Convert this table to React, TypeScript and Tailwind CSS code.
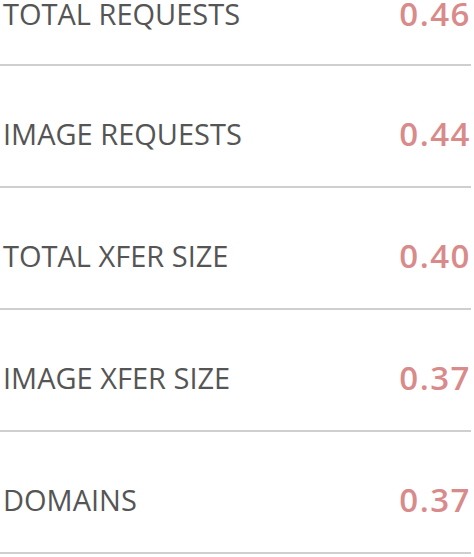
const rows = [
  { label: 'TOTAL REQUESTS', value: '0.46' },
  { label: 'IMAGE REQUESTS', value: '0.44' },
  { label: 'TOTAL XFER SIZE', value: '0.40' },
  { label: 'IMAGE XFER SIZE', value: '0.37' },
  { label: 'DOMAINS', value: '0.37' },
];

export default function App() {
  return (
    <div className="min-h-screen bg-white overflow-hidden font-['Open_Sans',sans-serif]">
      <ul className="-mt-1 pr-[3px]">
        {rows.map((r, i) => (
          <li
            key={r.label}
            className={`flex items-center justify-between border-b-2 border-[#cfcfcf] pl-[3px] ${i === 0 ? 'pt-0 pb-[32px]' : 'pt-[50px] pb-[34px]'}`}
          >
            <span className="text-[29px] leading-[36px] text-[#555555]">{r.label}</span>
            <span className="text-[33px] leading-[36px] font-semibold tracking-[1.5px] text-[#d98a8a]">{r.value}</span>
          </li>
        ))}
      </ul>
    </div>
  );
}
